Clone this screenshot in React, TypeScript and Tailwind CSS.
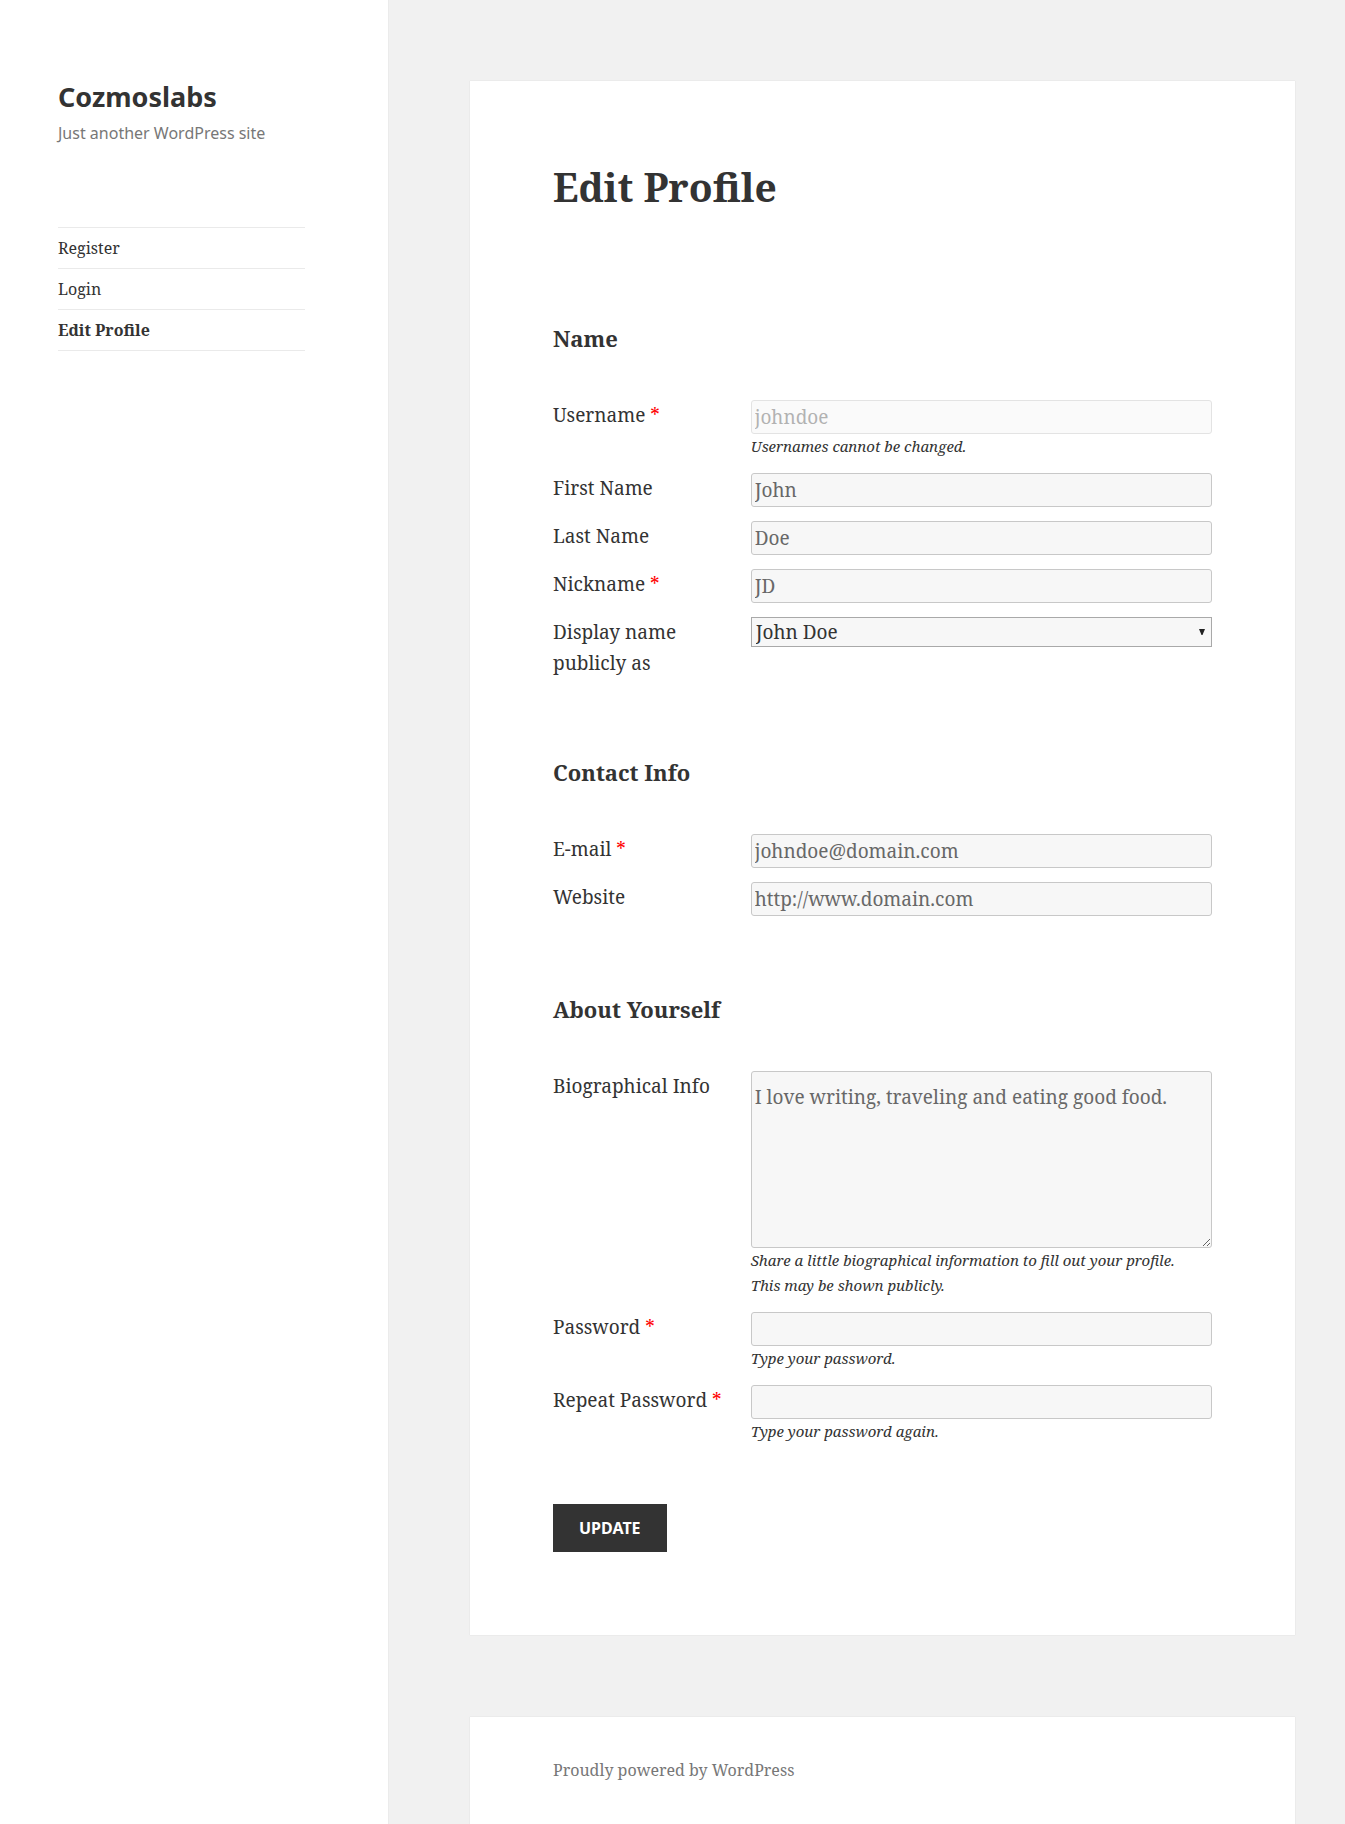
import type { ReactNode } from 'react';

const serif = "font-['Noto_Serif','Droid_Serif','DejaVu_Serif',serif]";
const sans = "font-['Noto_Sans',sans-serif]";

const control =
  'block h-[34px] w-full rounded-[3px] border border-[#c8c8c8] bg-[#f7f7f7] px-[3px] text-[19px] text-[#686868] disabled:opacity-50';

type FieldProps = {
  id: string;
  label: string;
  required?: boolean;
  note?: string;
  children: ReactNode;
};

function Field({ id, label, required, note, children }: FieldProps) {
  return (
    <div className="grid grid-cols-[3fr_7fr]">
      <label htmlFor={id} className="pr-4 text-[19px] leading-[31px]">
        {label}
        {required && <span className="text-[#ff0000]"> *</span>}
      </label>
      <div>
        {children}
        {note && <p className="pr-4 text-[15px] leading-[25px] italic">{note}</p>}
      </div>
    </div>
  );
}

function TextField(props: {
  id: string;
  label: string;
  value?: string;
  type?: string;
  required?: boolean;
  disabled?: boolean;
  note?: string;
}) {
  const { id, label, value = '', type = 'text', required, disabled, note } = props;
  return (
    <Field id={id} label={label} required={required} note={note}>
      <input id={id} type={type} defaultValue={value} disabled={disabled} className={control} />
    </Field>
  );
}

function Section({ title, children }: { title: string; children: ReactNode }) {
  return (
    <section>
      <h2 className="mb-[49px] text-[22px] leading-[26px] font-bold">{title}</h2>
      <div className="flex flex-col gap-[14px]">{children}</div>
    </section>
  );
}

const links = ['Register', 'Login', 'Edit Profile'];

export default function App() {
  return (
    <div className={`flex min-h-screen bg-[#f1f1f1] text-[#333333] ${serif}`}>
      <aside className="w-[388px] shrink-0 bg-white pt-[79px] pr-[83px] pl-[58px] shadow-[0_0_1px_rgba(0,0,0,0.15)]">
        <header className={sans}>
          <p className="text-[27px] leading-[35px] font-bold">
            <a href="#">Cozmoslabs</a>
          </p>
          <p className="mt-[7px] text-base leading-6 text-[#777777]">Just another WordPress site</p>
        </header>
        <nav className="mt-[82px] border-t border-[#eaeaea]">
          <ul>
            {links.map((link) => (
              <li key={link} className="border-b border-[#eaeaea]">
                <a
                  href="#"
                  className={
                    link === 'Edit Profile'
                      ? 'block text-base leading-10 font-bold'
                      : 'block text-base leading-10'
                  }
                >
                  {link}
                </a>
              </li>
            ))}
          </ul>
        </nav>
      </aside>

      <div className="flex min-w-0 flex-1 flex-col gap-[82px] pt-[81px] pr-[50px] pl-[82px]">
        <main className="bg-white p-[83px] shadow-[0_0_1px_rgba(0,0,0,0.15)]">
          <h1 className="text-[39px] leading-[46px] font-bold">Edit Profile</h1>
          <form className="mt-[115px]" onSubmit={(e) => e.preventDefault()}>
            <div className="flex flex-col gap-20">
              <Section title="Name">
                <TextField
                  id="username"
                  label="Username"
                  value="johndoe"
                  required
                  disabled
                  note="Usernames cannot be changed."
                />
                <TextField id="first-name" label="First Name" value="John" />
                <TextField id="last-name" label="Last Name" value="Doe" />
                <TextField id="nickname" label="Nickname" value="JD" required />
                <Field id="display-name" label="Display name publicly as">
                  <div className="relative">
                    <select
                      id="display-name"
                      className="block h-[30px] w-full appearance-none border border-[#a9a9a9] bg-[#f7f7f7] px-1 text-[19px] text-[#333333]"
                    >
                      <option>John Doe</option>
                      <option>JD</option>
                      <option>johndoe</option>
                    </select>
                    <svg
                      viewBox="0 0 6 6"
                      className="pointer-events-none absolute top-3 right-[7px] size-[6px]"
                      fill="#222222"
                      aria-hidden="true"
                    >
                      <path d="M0 0h6L3.5 6h-1z" />
                    </svg>
                  </div>
                </Field>
              </Section>

              <Section title="Contact Info">
                <TextField id="email" label="E-mail" type="email" value="johndoe@domain.com" required />
                <TextField id="website" label="Website" type="url" value="http://www.domain.com" />
              </Section>

              <Section title="About Yourself">
                <Field
                  id="bio"
                  label="Biographical Info"
                  note="Share a little biographical information to fill out your profile. This may be shown publicly."
                >
                  <textarea
                    id="bio"
                    defaultValue="I love writing, traveling and eating good food."
                    className="block h-[177px] w-full resize-y rounded-[3px] border border-[#c8c8c8] bg-[#f7f7f7] px-[3px] py-[10px] text-[19px] leading-[31px] text-[#686868]"
                  />
                </Field>
                <TextField
                  id="password"
                  label="Password"
                  type="password"
                  required
                  note="Type your password."
                />
                <TextField
                  id="repeat-password"
                  label="Repeat Password"
                  type="password"
                  required
                  note="Type your password again."
                />
              </Section>
            </div>
            <button
              type="submit"
              className={`mt-[60px] block h-12 bg-[#333333] px-[26px] text-base font-bold text-white uppercase ${sans}`}
            >
              Update
            </button>
          </form>
        </main>

        <footer className="flex-1 bg-white px-[83px] py-10 shadow-[0_0_1px_rgba(0,0,0,0.15)]">
          <a href="#" className="text-base leading-[27px] text-[#777777]">
            Proudly powered by WordPress
          </a>
        </footer>
      </div>
    </div>
  );
}
